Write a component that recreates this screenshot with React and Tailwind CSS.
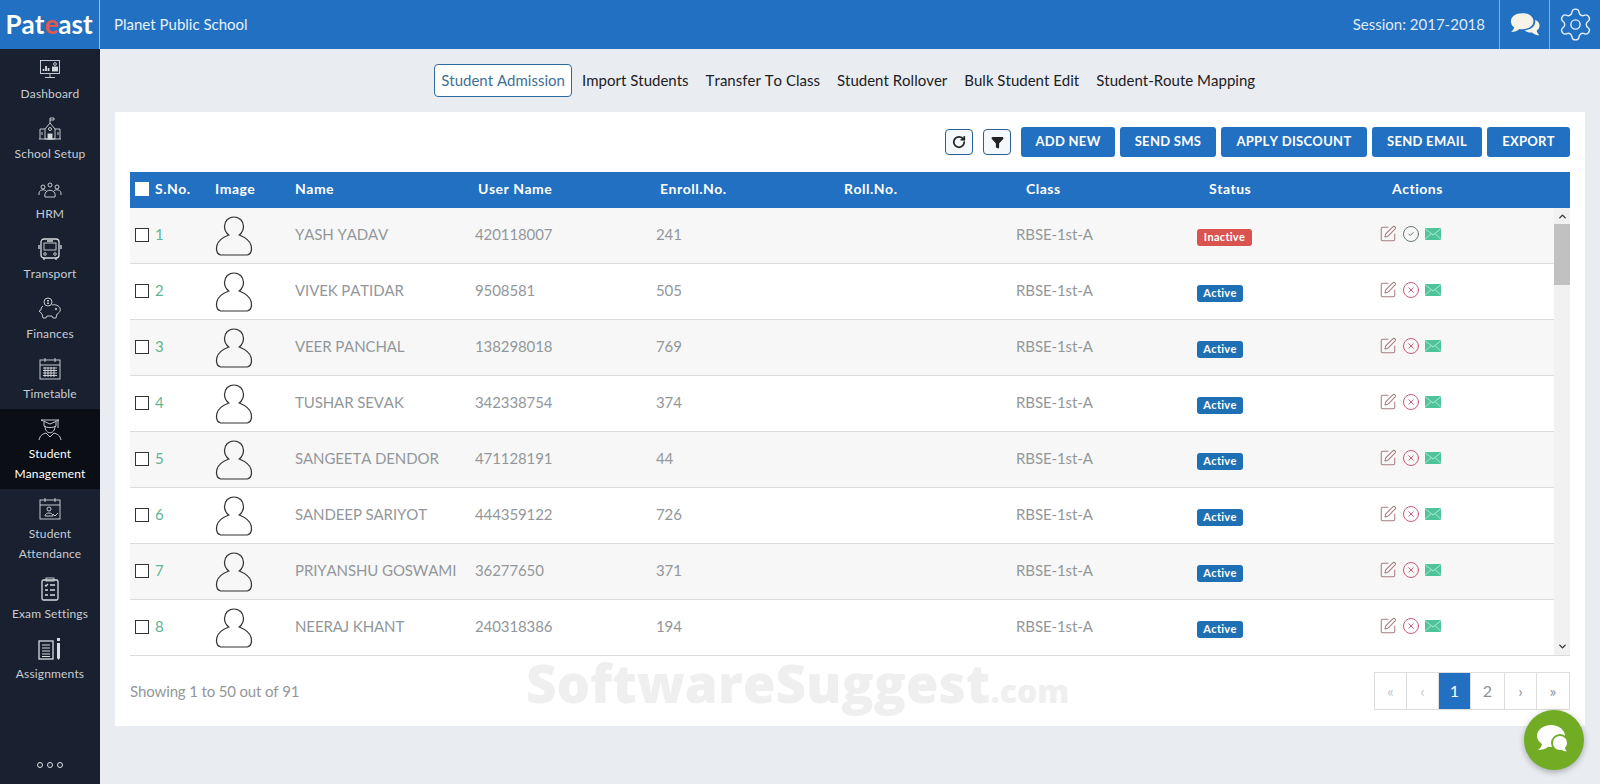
import { Settings, RotateCw, Filter, SquarePen, CircleCheck, CircleX, ChevronUp, ChevronDown } from "lucide-react";

const students = [
  { id: 1, name: "YASH YADAV", user: "420118007", enroll: "241", active: false },
  { id: 2, name: "VIVEK PATIDAR", user: "9508581", enroll: "505", active: true },
  { id: 3, name: "VEER PANCHAL", user: "138298018", enroll: "769", active: true },
  { id: 4, name: "TUSHAR SEVAK", user: "342338754", enroll: "374", active: true },
  { id: 5, name: "SANGEETA DENDOR", user: "471128191", enroll: "44", active: true },
  { id: 6, name: "SANDEEP SARIYOT", user: "444359122", enroll: "726", active: true },
  { id: 7, name: "PRIYANSHU GOSWAMI", user: "36277650", enroll: "371", active: true },
  { id: 8, name: "NEERAJ KHANT", user: "240318386", enroll: "194", active: true },
];

function Ico({ children }) {
  return (
    <svg width="26" height="24" viewBox="0 0 26 24" fill="none" stroke="#d8dbe0" strokeWidth="0.9">
      {children}
    </svg>
  );
}

const menu = [
  {
    label: ["Dashboard"],
    icon: (
      <Ico>
        <rect x="3.500" y="3.500" width="19" height="13" />
        <path d="M8 20.500h10M13 17v3.500" />
        <path d="M6.500 14v-2M9 14V9M11.500 14v-3" strokeWidth="1.800" />
        <circle cx="18" cy="7" r="1.400" />
        <rect x="15.500" y="10" width="5" height="4" fill="#d8dbe0" />
      </Ico>
    ),
  },
  {
    label: ["School Setup"],
    icon: (
      <Ico>
        <path d="M13 1v5M13 1h4v2h-4M3 22V12h5M23 22V12h-5M8 12l5-6 5 6v10H8zM2 22h22" />
        <circle cx="13" cy="12" r="1.500" />
        <rect x="11" y="17" width="4" height="5" fill="#d8dbe0" />
        <path d="M5 15v3M21 15v3" />
      </Ico>
    ),
  },
  {
    label: ["HRM"],
    icon: (
      <Ico>
        <circle cx="6" cy="10" r="2" />
        <circle cx="13" cy="8" r="2" />
        <circle cx="20" cy="10" r="2" />
        <path d="M2 18c-1-6 6-6 7-4M24 18c1-6-6-6-7-4M8 20c-2-9 12-9 10 0z" />
      </Ico>
    ),
  },
  {
    label: ["Transport"],
    icon: (
      <Ico>
        <rect x="4" y="2" width="18" height="19" rx="3" strokeWidth="1.300" />
        <rect x="7" y="6" width="12" height="7" />
        <path d="M10 4h6M2 8v4M24 8v4M7 21v2M19 21v2" strokeWidth="1.300" />
        <circle cx="8" cy="17" r="1.300" />
        <circle cx="18" cy="17" r="1.300" />
      </Ico>
    ),
  },
  {
    label: ["Finances"],
    icon: (
      <Ico>
        <circle cx="11" cy="5" r="4" />
        <path d="M10 3.500h2M10 6.500h2M11 3v4" strokeWidth="0.800" />
        <path d="M6 9c-2 1-2 3-2 4l-2 1 3 3 1 4h3l1-2h5l1 2h3l1-4c2-1 4-3 3-6-1-2-4-4-8-3" />
        <circle cx="19" cy="12" r="0.800" />
      </Ico>
    ),
  },
  {
    label: ["Timetable"],
    icon: (
      <Ico>
        <rect x="3" y="3" width="20" height="19" />
        <path d="M3 8h20M8 1v4M18 1v4" />
        <path d="M6 11h14M6 13.500h14M6 16h14M6 18.500h14M8 10v10M11 10v10M14 10v10M17 10v10" strokeWidth="0.900" />
      </Ico>
    ),
  },
  {
    label: ["Student", "Management"],
    active: true,
    icon: (
      <Ico>
        <path d="M4 3h18l-9 4zM7 5v4c2 2 10 2 12 0V5M21 4v7" />
        <path d="M8 9c0 9 10 9 10 0" />
        <path d="M2 23c1-5 4-6 7-7l4 4 4-4c3 1 6 2 7 7" />
      </Ico>
    ),
  },
  {
    label: ["Student", "Attendance"],
    icon: (
      <Ico>
        <rect x="3" y="3" width="20" height="19" />
        <path d="M3 8h20M8 1v4M18 1v4" />
        <circle cx="12" cy="12" r="2" />
        <path d="M8 19c0-4 8-4 8 0zM16 17l2 2 3-3" />
      </Ico>
    ),
  },
  {
    label: ["Exam Settings"],
    icon: (
      <Ico>
        <rect x="5" y="3" width="16" height="20" rx="1.500" strokeWidth="1.300" />
        <rect x="9" y="1" width="8" height="3" />
        <path d="M8 8l1 1 2-2M8 13h3M8 18h3M13 8h5M13 13h5M13 18h5" strokeWidth="1.300" />
      </Ico>
    ),
  },
  {
    label: ["Assignments"],
    icon: (
      <Ico>
        <rect x="2" y="4" width="14" height="18" strokeWidth="1.300" />
        <path d="M5 8h8M5 11h8M5 14h8M5 17h8M5 19.500h8" strokeWidth="1.100" />
        <path d="M20 1h3v3h-3zM20 6h3v15l-1.500 2-1.500-2z" fill="#d8dbe0" stroke="none" />
      </Ico>
    ),
  },
];

function Sidebar() {
  return (
    <aside className="w-[100px] shrink-0 bg-[#19202f] flex flex-col text-center">
      {menu.map((m) => (
        <div
          key={m.label[0] + m.label.length}
          className={m.active ? "bg-[#0b0e14] pt-2 pb-[5px] text-white" : "pt-2 pb-[5px] text-[#c8cdd5]"}
        >
          <div className="h-6 mb-[3px] flex justify-center">{m.icon}</div>
          {m.label.map((l) => (
            <div key={l} className="text-[12px] leading-5 tracking-[0.15px]">
              {l}
            </div>
          ))}
        </div>
      ))}
      <div className="mt-auto mb-[16px] flex justify-center gap-[4px]">
        <span className="w-[6px] h-[6px] rounded-full border border-[#dfe2e6]" />
        <span className="w-[6px] h-[6px] rounded-full border border-[#dfe2e6]" />
        <span className="w-[6px] h-[6px] rounded-full border border-[#dfe2e6]" />
      </div>
    </aside>
  );
}

function Header() {
  return (
    <header className="h-[49px] shrink-0 bg-[#2270c1] flex items-center text-white">
      <div className="w-[100px] h-full border-r border-[#9cc3ea] flex items-center justify-center text-[26px] font-bold leading-none pb-px pr-px">
        Pat<span className="text-[#e4574c]">e</span>ast
      </div>
      <div className="pl-[14px] text-[15px] text-[#e8f1fa]">Planet Public School</div>
      <div className="ml-auto pr-[14px] text-[15px] text-[#dfeaf6]">Session: 2017-2018</div>
      <div className="w-[50px] h-full border-l border-[#7fb0e0] flex items-center justify-center">
        <svg width="30" height="25" viewBox="0 0 32 26" fill="#f7f3e6">
          <path d="M13 1c7 0 12 3.500 12 8.500S20 18 13 18c-1 0-2 0-3-.2C8 20 5 21 1 21c2-1.500 3-3 3.500-5C2 14.500 1 12 1 9.500 1 4.500 6 1 13 1z" />
          <path d="M27 8c3 1.500 4.500 3.500 4.500 6 0 2.500-1 4-3 5.500.3 2 1.200 3.500 3 5-3.500 0-6-1-8-3-3 .3-6-.5-8-2.500 7 0 12-4 11.500-11z" />
        </svg>
      </div>
      <div className="w-[51px] h-full border-l border-[#7fb0e0] flex items-center justify-center">
        <Settings size={37} strokeWidth={0.9} color="#e6f0fa" />
      </div>
    </header>
  );
}

function Tabs() {
  const tabs = ["Import Students", "Transfer To Class", "Student Rollover", "Bulk Student Edit", "Student-Route Mapping"];
  return (
    <div className="h-[63px] flex items-center pl-[319px] pb-[1px] text-[15px]">
      <div className="h-[33px] w-[138px] mt-[1px] bg-white border border-[#2f6a9f] rounded flex items-center justify-center text-[#3f6f96]">
        Student Admission
      </div>
      <div className="flex gap-[17px] ml-[10px] text-[#1c2024]">
        {tabs.map((t) => (
          <span key={t}>{t}</span>
        ))}
      </div>
    </div>
  );
}

function Toolbar() {
  const actions = [
    ["ADD NEW", "w-[94px]"],
    ["SEND SMS", "w-[96px]"],
    ["APPLY DISCOUNT", "w-[146px]"],
    ["SEND EMAIL", "w-[110px]"],
    ["EXPORT", "w-[83px]"],
  ];
  return (
    <div className="flex items-center justify-end h-[30px]">
      <button className="w-[28px] h-[26px] mr-[10px] bg-[#f4f8fb] border border-[#2a5f8f] rounded-sm flex items-center justify-center">
        <RotateCw size={14} strokeWidth={3} color="#222" />
      </button>
      <button className="w-[28px] h-[26px] mr-[10px] bg-[#f4f8fb] border border-[#2a5f8f] rounded-sm flex items-center justify-center">
        <Filter size={13} fill="#222" color="#222" />
      </button>
      <div className="flex gap-[5px]">
        {actions.map(([label, w]) => (
          <button
            key={label}
            className={`${w} h-[30px] bg-[#2270c1] rounded-[3px] text-white text-[13px] font-bold tracking-[0.3px] text-center`}
          >
            {label}
          </button>
        ))}
      </div>
    </div>
  );
}

function Avatar() {
  return (
    <svg width="38" height="40" viewBox="0 0 40 42" fill="none" stroke="#333" strokeWidth="1.300" className="mt-[2px]">
      <path d="M20 1c6 0 10 4.500 10 10 0 4-2 7-4.500 9 5 2 11 5 12.500 11 1 5 0 9-4 10H6c-4-1-5-5-4-10 1.500-6 7.500-9 12.500-11C12 18 10 15 10 11c0-5.500 4-10 10-10z" />
    </svg>
  );
}

function MailIcon() {
  return (
    <svg width="16" height="12" viewBox="0 0 16 12">
      <rect width="16" height="12" rx="1" fill="#4fc49a" />
      <path d="M0.500 1l7.500 6 7.500-6M0.500 11l5.500-5.500M15.500 11l-5.500-5.500" fill="none" stroke="#bfeedd" strokeWidth="0.900" />
    </svg>
  );
}

function Row({ s, idx }) {
  return (
    <div
      className={`h-[53px] pb-[2px] box-content border-b border-[#dcdcdc] grid grid-cols-[25px_60px_80px_180px_181px_360px_181px_183px_1fr] items-center text-[15px] text-[#93979b] tracking-[-0.1px] ${
        idx % 2 === 0 ? "bg-[#f7f7f7]" : "bg-white"
      }`}
    >
      <span className="ml-[5px] w-[14px] h-[14px] border-[1.5px] border-[#333] bg-white" />
      <span className="text-[#5fb595]">{s.id}</span>
      <span className="flex justify-start">
        <Avatar />
      </span>
      <span className="whitespace-nowrap">{s.name}</span>
      <span>{s.user}</span>
      <span>{s.enroll}</span>
      <span>RBSE-1st-A</span>
      <span className="flex">
        {s.active ? (
          <span className="h-[17px] w-[46px] mt-[5px] text-center bg-[#1f6fb5] rounded-[3px] text-white text-[11px] font-bold leading-[16px] tracking-[0.3px]">
            Active
          </span>
        ) : (
          <span className="h-[17px] w-[55px] mt-[5px] text-center bg-[#d9534f] rounded-[3px] text-white text-[11px] font-bold leading-[16px] tracking-[0.3px]">
            Inactive
          </span>
        )}
      </span>
      <span className="flex items-center gap-[5px] -ml-[1px] -mt-[2px]">
        <SquarePen size={18} color="#a67f7f" strokeWidth={1.4} />
        {s.active ? (
          <CircleX size={18} color="#c0496b" strokeWidth={1.2} />
        ) : (
          <CircleCheck size={18} color="#5a6b66" strokeWidth={1.2} />
        )}
        <MailIcon />
      </span>
    </div>
  );
}

function Table() {
  const cols = ["S.No.", "Image", "Name", "User Name", "Enroll.No.", "Roll.No.", "Class", "Status", "Actions"];
  return (
    <div className="mt-[15px]">
      <div className="h-[36px] pb-[4px] bg-[#2270c1] grid grid-cols-[25px_60px_80px_183px_182px_184px_182px_183px_183px_1fr] items-center text-white text-[14px] font-bold tracking-[0.5px]">
        <span className="ml-[5px] mt-[2px] w-[14px] h-[14px] bg-white" />
        {cols.map((c) => (
          <span key={c}>{c}</span>
        ))}
      </div>
      <div className="flex">
        <div className="flex-1">
          {students.map((s, i) => (
            <Row key={s.id} s={s} idx={i} />
          ))}
        </div>
        <div className="w-[16px] bg-[#f1f1f1] flex flex-col border-b border-[#dcdcdc]">
          <div className="h-[16px] flex items-center justify-center">
            <ChevronUp size={11} strokeWidth={3} color="#333" />
          </div>
          <div className="h-[61px] bg-[#c1c1c1]" />
          <div className="mt-auto h-[17px] flex items-center justify-center">
            <ChevronDown size={11} strokeWidth={3} color="#333" />
          </div>
        </div>
      </div>
    </div>
  );
}

function Pagination() {
  const items = [
    ["«", "w-[33px] text-[#c4c8cc]"],
    ["‹", "w-[33px] text-[#c4c8cc]"],
    ["1", "w-[33px] bg-[#2270c1] text-white border-[#2270c1]"],
    ["2", "w-[35px] text-[#8c9196]"],
    ["›", "w-[33px] text-[#8c9196]"],
    ["»", "w-[34px] text-[#8c9196]"],
  ];
  return (
    <div className="flex h-[38px]">
      {items.map(([t, c]) => (
        <span key={t} className={`${c} -ml-px border border-[#dedede] flex items-center justify-center text-[16px]`}>
          {t}
        </span>
      ))}
    </div>
  );
}

export default function App() {
  return (
    <div className="relative w-[1600px] h-[784px] overflow-hidden flex flex-col bg-[#e9edf2] [font-kerning:none] font-['Lato','Liberation_Sans',sans-serif]">
      <Header />
      <div className="flex flex-1 min-h-0">
        <Sidebar />
        <main className="flex-1 pl-[15px] pr-[15px]">
          <Tabs />
          <section className="relative bg-white px-[15px] pt-[15px] pb-[16px]">
            <Toolbar />
            <Table />
            <div className="flex items-center justify-between mt-[16px]">
              <span className="text-[15px] text-[#93979b] tracking-[-0.15px]">Showing 1 to 50 out of 91</span>
              <Pagination />
            </div>
            {/* watermark sits over the footer */}
            <div className="absolute left-[411px] top-[536px] whitespace-nowrap text-[#efefef] font-['Open_Sans',sans-serif] font-extrabold text-[53px] leading-[70px]">
              SoftwareSuggest<span className="text-[32px]">.com</span>
            </div>
          </section>
        </main>
      </div>
      <div className="absolute left-[1524px] top-[710px] w-[60px] h-[60px] rounded-full bg-[#72ac25] shadow-[0_2px_6px_rgba(0,0,0,0.3)] flex items-center justify-center">
        <svg width="36" height="32" viewBox="0 0 36 32" fill="#fff">
          <path d="M15 1c8 0 14 5 14 11s-6 11-14 11c-1 0-2 0-3-.2C10 25 6 26 2 26c2-1.500 3.500-3.500 4-6C3 18 1 15 1 12 1 6 7 1 15 1z" />
          <circle cx="24" cy="19" r="9" fill="#72ac25" />
          <path d="M24 12c4 0 7 3 7 7 0 2-.8 3.500-2 4.800.2 1.500.8 2.700 2 3.700-2.500 0-4-.6-5.300-1.700-.6.1-1.100.2-1.700.2-4 0-7-3-7-7s3-7 7-7z" />
        </svg>
      </div>
    </div>
  );
}
